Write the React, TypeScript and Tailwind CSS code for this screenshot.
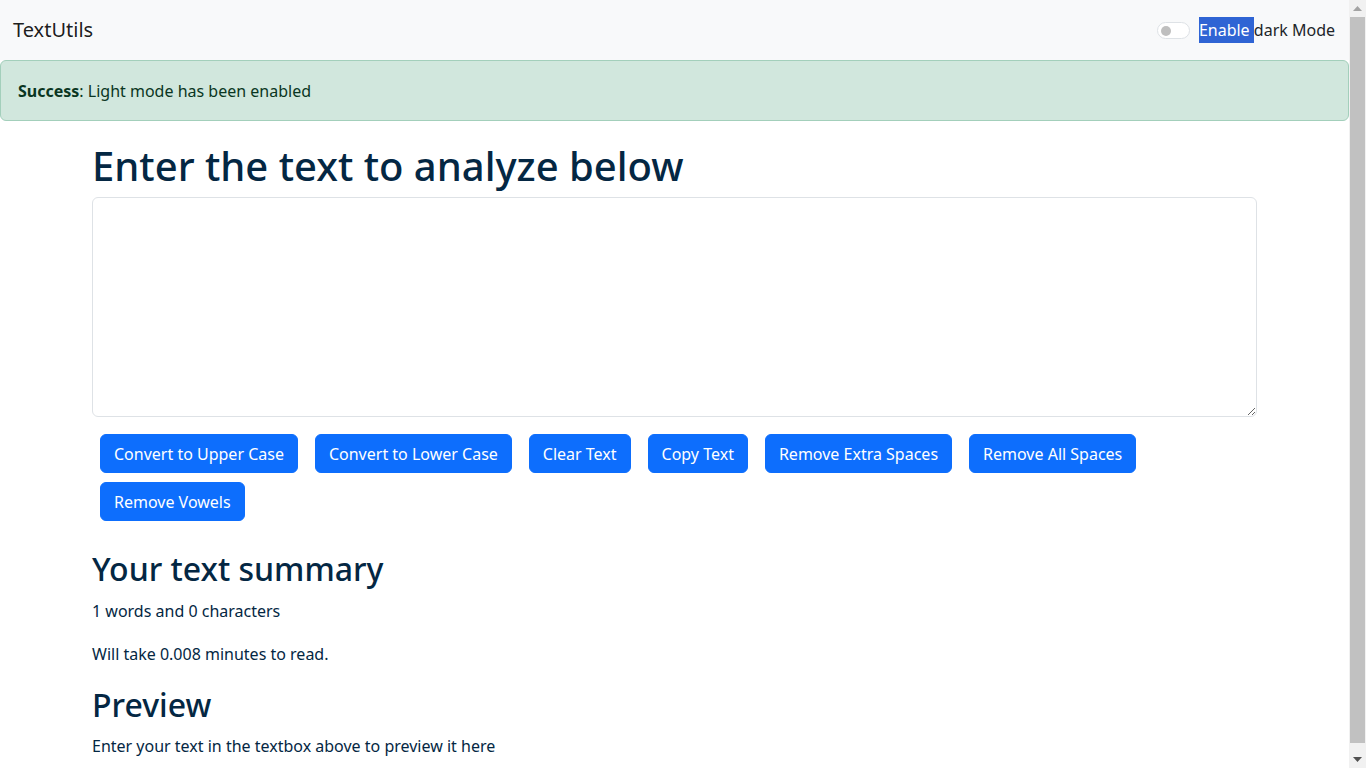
import { useState } from 'react';

const buttons = [
  'Convert to Upper Case',
  'Convert to Lower Case',
  'Clear Text',
  'Copy Text',
  'Remove Extra Spaces',
  'Remove All Spaces',
  'Remove Vowels',
];

export default function App() {
  const [text, setText] = useState('');
  const words = text.split(' ').length;

  return (
    <div className="flex h-screen overflow-hidden bg-white font-['Noto_Sans',sans-serif] text-[#042743]">
      <main className="min-w-0 flex-1">
        <nav className="flex h-[60px] items-center justify-between bg-[#f8f9fa] pl-[13px] pr-[14px]">
          <a className="text-[20px] text-black/90" href="#">TextUtils</a>
          <div className="flex items-center text-[16px] text-[#212529]">
            <span className="relative mr-[9px] h-[17px] w-[33px] rounded-full border border-[#dee2e6] bg-white">
              <span className="absolute left-[3px] top-[3px] h-[10px] w-[10px] rounded-full bg-[#bfbfbf]" />
            </span>
            <label>
              <span className="bg-[#2f64d4] py-[2px] text-white">Enable </span>dark Mode
            </label>
          </div>
        </nav>

        <div className="flex h-[61px] items-center rounded-[6px] border border-[#a3cfbb] bg-[#d1e7dd] px-[17px] text-[16px] text-[#0a3622]">
          <strong className="font-bold">Success</strong>: Light mode has been enabled
        </div>

        <div className="mx-auto w-[1165px]">
          <h1 className="mt-[21px] mb-[7px] text-[40px] font-medium leading-[1.2]">Enter the text to analyze below</h1>
          <textarea
            className="block h-[220px] w-full rounded-[6px] border border-[#dee2e6] px-3 py-[6px] outline-none"
            value={text}
            onChange={e => setText(e.target.value)}
          />
          <div className="mt-[17px] flex flex-wrap gap-x-[17px] gap-y-[9px] pl-2">
            {buttons.map(b => (
              <button key={b} className="h-[39px] rounded-[6px] border border-[#0d6efd] bg-[#0d6efd] px-[13px] text-[16px] text-white">
                {b}
              </button>
            ))}
          </div>

          <h2 className="mt-[29px] mb-[10px] text-[32px] font-medium leading-[1.2]">Your text summary</h2>
          <p className="mb-4 text-[16px] leading-[27px]">{words} words and {text.length} characters</p>
          <p className="mb-[18px] text-[16px] leading-[27px]">Will take {0.008 * words} minutes to read.</p>
          <h2 className="mb-[8px] text-[32px] font-medium leading-[1.2]">Preview</h2>
          <p className="text-[16px] leading-[27px]">{text.length > 0 ? text : 'Enter your text in the textbox above to preview it here'}</p>
        </div>
      </main>

      {/* page scrollbar as in the screenshot */}
      <div className="flex w-[17px] flex-col bg-[#f1f1f1]">
        <div className="flex h-[17px] items-center justify-center">
          <svg width="9" height="5" viewBox="0 0 9 5"><path d="M0 5 L4.5 0 L9 5 Z" fill="#a3a3a3" /></svg>
        </div>
        <div className="mx-[1px] mb-[8px] flex-1 bg-[#c1c1c1]" />
        <div className="flex h-[17px] items-center justify-center">
          <svg width="9" height="5" viewBox="0 0 9 5"><path d="M0 0 L9 0 L4.5 5 Z" fill="#505050" /></svg>
        </div>
      </div>
    </div>
  );
}
